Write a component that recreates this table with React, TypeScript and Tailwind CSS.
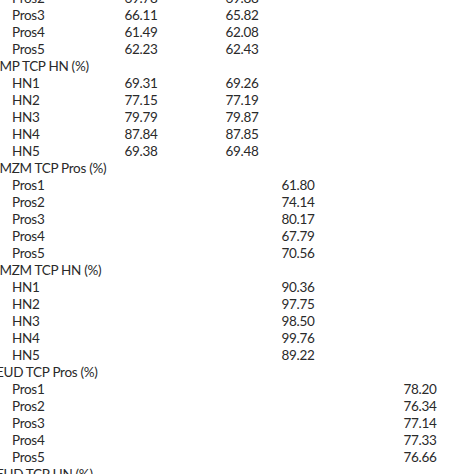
import React from 'react';

type Row =
  | { kind: 'head'; label: string }
  | { kind: 'item'; label: string; col: 1 | 2 | 3; a: string; b?: string };

// each row is 17px high; col 1 = MP (two values), 2 = MZM, 3 = EUD
const rows: Row[] = [
  { kind: 'item', label: 'Pros2', col: 1, a: '69.78', b: '69.88' },
  { kind: 'item', label: 'Pros3', col: 1, a: '66.11', b: '65.82' },
  { kind: 'item', label: 'Pros4', col: 1, a: '61.49', b: '62.08' },
  { kind: 'item', label: 'Pros5', col: 1, a: '62.23', b: '62.43' },
  { kind: 'head', label: 'IMP TCP HN (%)' },
  { kind: 'item', label: 'HN1', col: 1, a: '69.31', b: '69.26' },
  { kind: 'item', label: 'HN2', col: 1, a: '77.15', b: '77.19' },
  { kind: 'item', label: 'HN3', col: 1, a: '79.79', b: '79.87' },
  { kind: 'item', label: 'HN4', col: 1, a: '87.84', b: '87.85' },
  { kind: 'item', label: 'HN5', col: 1, a: '69.38', b: '69.48' },
  { kind: 'head', label: 'IMZM TCP Pros (%)' },
  { kind: 'item', label: 'Pros1', col: 2, a: '61.80' },
  { kind: 'item', label: 'Pros2', col: 2, a: '74.14' },
  { kind: 'item', label: 'Pros3', col: 2, a: '80.17' },
  { kind: 'item', label: 'Pros4', col: 2, a: '67.79' },
  { kind: 'item', label: 'Pros5', col: 2, a: '70.56' },
  { kind: 'head', label: 'IMZM TCP HN (%)' },
  { kind: 'item', label: 'HN1', col: 2, a: '90.36' },
  { kind: 'item', label: 'HN2', col: 2, a: '97.75' },
  { kind: 'item', label: 'HN3', col: 2, a: '98.50' },
  { kind: 'item', label: 'HN4', col: 2, a: '99.76' },
  { kind: 'item', label: 'HN5', col: 2, a: '89.22' },
  { kind: 'head', label: 'EUD TCP Pros (%)' },
  { kind: 'item', label: 'Pros1', col: 3, a: '78.20' },
  { kind: 'item', label: 'Pros2', col: 3, a: '76.34' },
  { kind: 'item', label: 'Pros3', col: 3, a: '77.14' },
  { kind: 'item', label: 'Pros4', col: 3, a: '77.33' },
  { kind: 'item', label: 'Pros5', col: 3, a: '76.66' },
  { kind: 'head', label: 'EUD TCP HN (%)' },
];

const Cell = ({ v }: { v?: string }) => (
  <span className="w-[56px] shrink-0 text-center">{v ?? ''}</span>
);

export default function App() {
  return (
    <div
      className="h-[474px] w-[474px] overflow-hidden bg-white text-[13.5px] tracking-[-0.3px] text-[#2a2a2a]"
      style={{ fontFamily: 'Lato, "Noto Sans", sans-serif' }}
    >
      <div className="-mt-[10px] flex flex-col">
        {rows.map((r, i) =>
          r.kind === 'head' ? (
            <div key={i} className="flex h-[17px] items-center whitespace-nowrap -ml-[4px]">
              {r.label}
            </div>
          ) : (
            <div key={i} className="flex h-[17px] items-center whitespace-nowrap">
              <span className="w-[113px] shrink-0 pl-[12px]">{r.label}</span>
              <Cell v={r.col === 1 ? r.a : undefined} />
              <span className="w-[45px] shrink-0" />
              <Cell v={r.col === 1 ? r.b : undefined} />
              <Cell v={r.col === 2 ? r.a : undefined} />
              <span className="w-[66px] shrink-0" />
              <Cell v={r.col === 3 ? r.a : undefined} />
            </div>
          )
        )}
      </div>
    </div>
  );
}
